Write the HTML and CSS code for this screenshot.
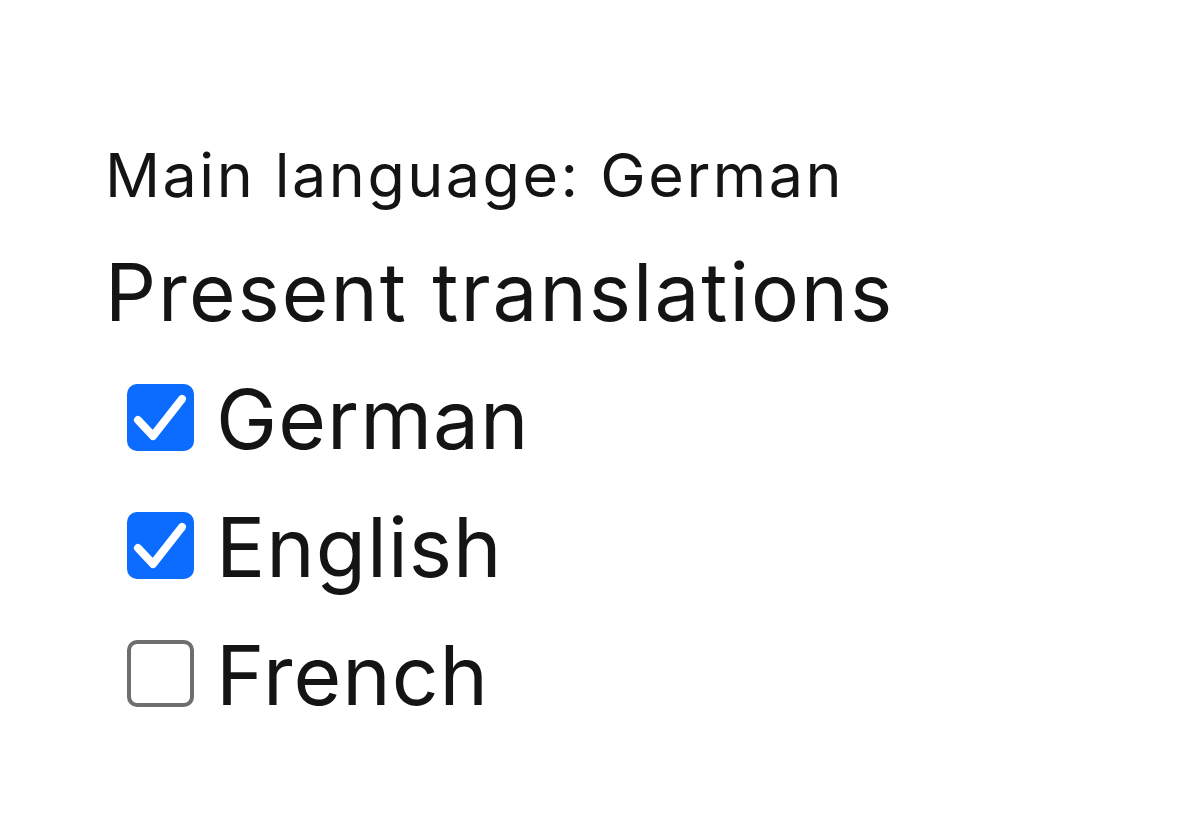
FILE: index.html
```html
<!DOCTYPE html>
<html lang="en">
<head>
    <meta charset="UTF-8">
    <title>Translations</title>
    <link rel="stylesheet" href="styles.css">
</head>
<body>
    <div class="panel">
        <p class="main-lang">Main language: German</p>
        <h2 class="title">Present translations</h2>
        <ul class="lang-list">
            <li class="lang-item">
                <span class="box checked">
                    <svg viewBox="0 0 67 67"><path d="M11 36 L26 52 L55 15" /></svg>
                </span>
                <span class="lang-name">German</span>
            </li>
            <li class="lang-item">
                <span class="box checked">
                    <svg viewBox="0 0 67 67"><path d="M11 36 L26 52 L55 15" /></svg>
                </span>
                <span class="lang-name">English</span>
            </li>
            <li class="lang-item">
                <span class="box"></span>
                <span class="lang-name">French</span>
            </li>
        </ul>
    </div>
</body>
</html>
```

FILE: styles.css
```css
* {
    box-sizing: border-box;
    margin: 0;
    padding: 0;
    font-family: Inter, 'Noto Sans', sans-serif;
}

body {
    background-color: #ffffff;
    color: #141414;
}

.panel {
    padding: 135px 0 0 105px;
}

.main-lang {
    font-size: 61px;
    line-height: 80px;
    letter-spacing: 2.5px;
}

.title {
    font-size: 80px;
    font-weight: 400;
    line-height: 100px;
    margin-top: 27px;
    letter-spacing: 2px;
}

.lang-list {
    list-style: none;
    margin-top: 11px;
    padding-left: 22px;
}

.lang-item {
    display: flex;
    align-items: center;
    gap: 22px;
    height: 128px;
}

.box {
    width: 67px;
    height: 67px;
    border: 4px solid #6e6e6e;
    border-radius: 10px;
    display: flex;
    align-items: center;
    justify-content: center;
    flex-shrink: 0;
}

.box.checked {
    background-color: #0b6cff;
    border: none;
}

.box svg {
    width: 67px;
    height: 67px;
}

.box svg path {
    fill: none;
    stroke: #ffffff;
    stroke-width: 8;
    stroke-linecap: round;
    stroke-linejoin: round;
}

.lang-name {
    font-size: 82px;
    line-height: 100px;
    letter-spacing: 1px;
    padding-top: 6px;
}
```
